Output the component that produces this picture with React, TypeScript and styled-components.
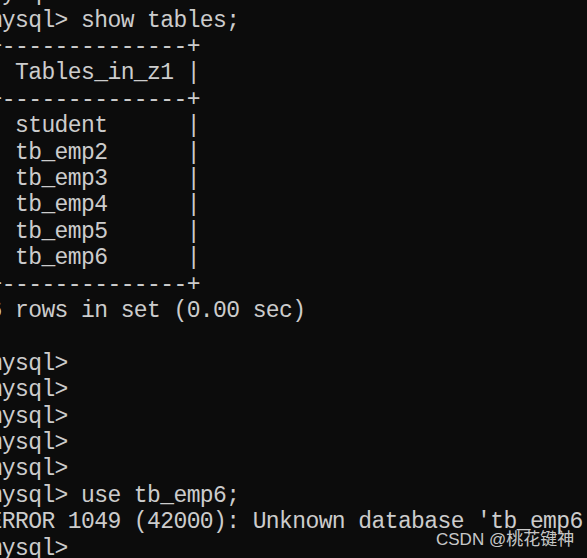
import React from "react";
import styled, { createGlobalStyle } from "styled-components";

const GlobalStyle = createGlobalStyle`
  html, body {
    margin: 0;
    padding: 0;
    background: #0c0c0c;
  }
`;

const Screen = styled.div`
  position: relative;
  width: 587px;
  height: 558px;
  overflow: hidden;
  background: #0c0c0c;
`;

const Console = styled.pre`
  margin: -18.7px 0 0 -11.4px;
  font-family: "Liberation Mono", "Courier New", monospace;
  font-size: 23px;
  letter-spacing: -0.6px;
  line-height: 26.4px;
  color: #cccccc;
  white-space: pre;
`;

const Line = styled.div`
  height: 26.4px;
`;

const Watermark = styled.div`
  position: absolute;
  left: 436px;
  top: 529px;
  font-family: "Liberation Sans", "Noto Sans CJK SC", sans-serif;
  font-size: 17px;
  line-height: 22px;
  color: rgba(225, 225, 225, 0.9);
  white-space: nowrap;
`;

const lines = [
  "mysql>",
  "mysql> show tables;",
  "+--------------+",
  "| Tables_in_z1 |",
  "+--------------+",
  "| student      |",
  "| tb_emp2      |",
  "| tb_emp3      |",
  "| tb_emp4      |",
  "| tb_emp5      |",
  "| tb_emp6      |",
  "+--------------+",
  "6 rows in set (0.00 sec)",
  "",
  "mysql>",
  "mysql>",
  "mysql>",
  "mysql>",
  "mysql>",
  "mysql> use tb_emp6;",
  "ERROR 1049 (42000): Unknown database 'tb_emp6'",
  "mysql>",
];

export default function App() {
  return (
    <>
      <GlobalStyle />
      <Screen>
        <Console>
          {lines.map((l, i) => (
            <Line key={i}>{l}</Line>
          ))}
        </Console>
        <Watermark>CSDN @桃花键神</Watermark>
      </Screen>
    </>
  );
}
